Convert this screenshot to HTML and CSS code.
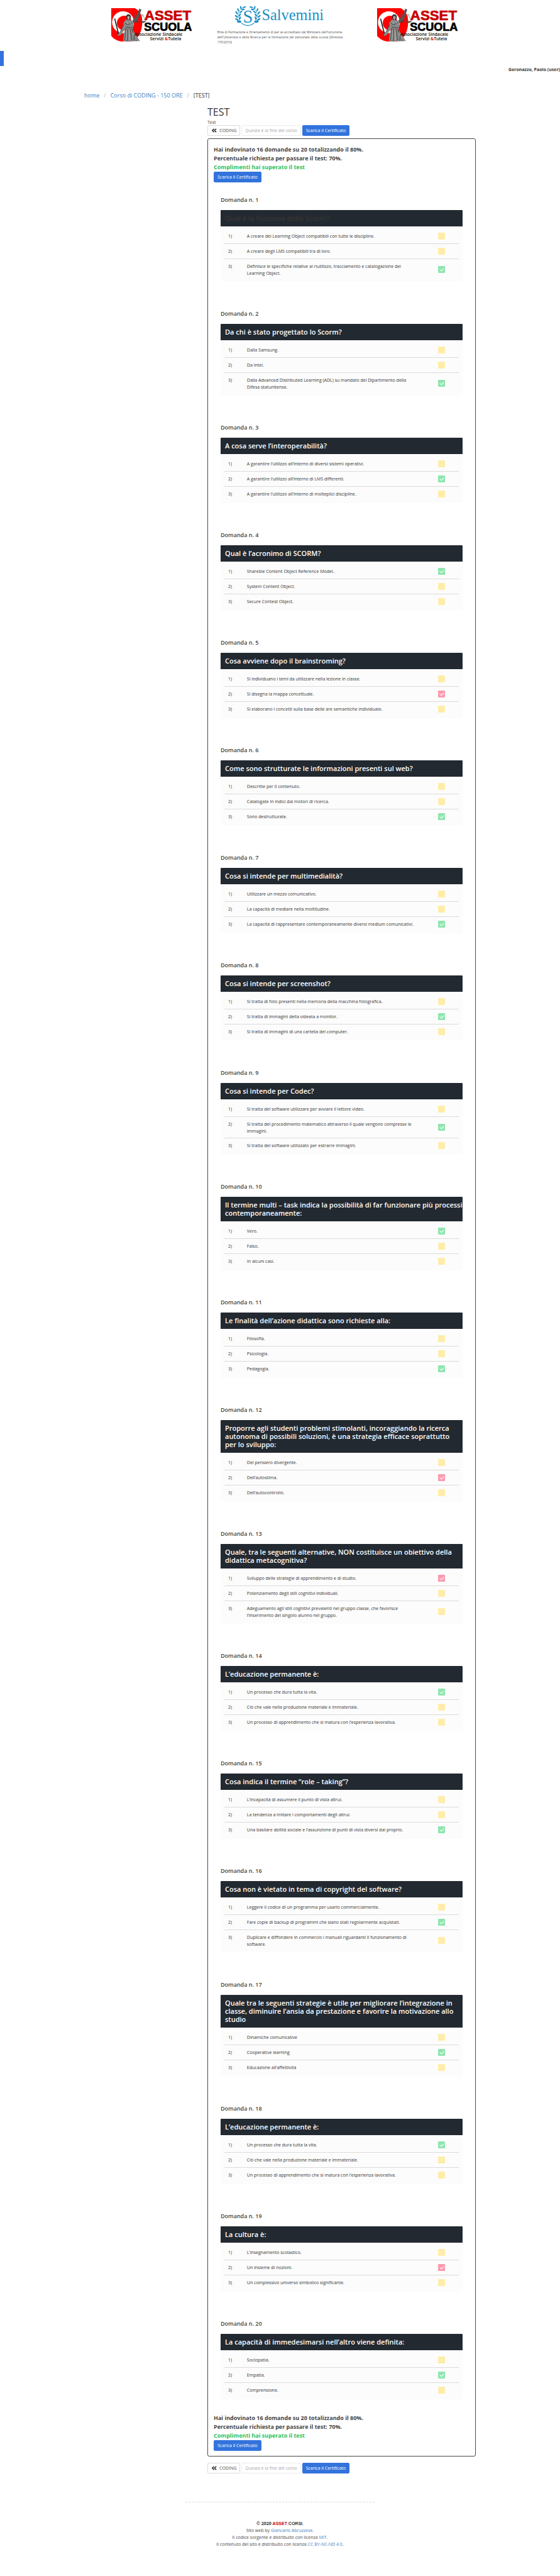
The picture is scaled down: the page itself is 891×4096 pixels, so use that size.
FILE: index.html
```html
<!DOCTYPE html>
<html lang="it">
<head>
    <meta charset="utf-8">
    <meta name="viewport" content="width=device-width, initial-scale=1">
    <title>TEST - Corso di CODING - 150 ORE</title>
    <link rel="stylesheet" href="styles.css">
</head>
<body>
    <header class="top">
        <svg class="logo" viewBox="0 0 164 76" role="img" aria-label="Asset Scuola">
            <g id="asset-logo">
                <path fill="#f00" d="M0 0H54C66 6 71 18 71 31C71 54 60 76 40 76H25C14 75 5 70 0 63Z"/>
                <circle cx="27" cy="32" r="25" fill="#fff"/>
                <circle cx="30" cy="34" r="17" fill="#f00"/>
                <g stroke="#555" stroke-width=".8" fill="none">
                    <path d="M52 14L73 15M54 14L50 29M56 14L61 29M71 15L68 30M73 15L78 30"/>
                    <path fill="#333" d="M49 29H62Q56 36 49 29ZM67 30H79Q73 36 67 30Z"/>
                </g>
                <path d="M8 24L18 64" stroke="#222" stroke-width="2.4"/>
                <path fill="#555" d="M64 1L69 3L67 9L61 26L50 35L48 29L58 18L62 8Z"/>
                <path fill="#8a8a8a" d="M35 25L42 27L50 29L51 40L49 49L57 62L66 75L27 76L29 57L33 46L22 61L16 64L15 61L26 43L29 31Z"/>
                <path fill="#333" d="M34 19Q35 13 40 14Q46 15 45 22L43 27H36Z"/>
                <path fill="#aaa" d="M37 18H42V24L39 27L37 24Z"/>
                <path stroke="#3c3c3c" stroke-width="1.3" fill="none" d="M34 46L31 74M38 47L37 75M43 47L47 74M47 48L58 75M31 34L38 38L48 33M33 43L49 45M29 37L22 52M53 60L52 75"/>
                <path stroke="#d0d0d0" stroke-width="1" fill="none" d="M35 50L34 72M41 49L42 73M50 56L57 72M36 31L37 35M44 31L44 35"/>
                <g class="logo-name">
                    <text x="76" y="27" font-size="32" fill="#c80000" stroke="#c80000">ASSET</text>
                    <text x="75" y="51" font-size="26" fill="#000" stroke="#000">SCUOLA</text>
                </g>
                <g class="logo-sub">
                    <text x="163" y="63" font-size="10" text-anchor="end">Associazione Sindacale</text>
                    <text x="160" y="73" font-size="10" text-anchor="end">Servizi <tspan fill="#d00">&amp;</tspan>Tutela</text>
                </g>
            </g>
        </svg>
        <div class="ente">
            <svg class="salvemini" viewBox="0 0 204 46" role="img" aria-label="Salvemini">
                <defs>
                    <g id="branch" fill="#1b8fc4">
                        <path d="M14 35C3 25 5 9 20 2" fill="none" stroke="#1b8fc4" stroke-width="1"/>
                        <ellipse cx="21" cy="2" rx="4" ry="1.5" transform="rotate(-15 21 2)"/>
                        <ellipse cx="13" cy="3" rx="1.6" ry="3.6" transform="rotate(-10 13 3)"/>
                        <ellipse cx="18" cy="7" rx="4" ry="1.5" transform="rotate(-10 18 7)"/>
                        <ellipse cx="7" cy="8" rx="1.6" ry="4" transform="rotate(-20 7 8)"/>
                        <ellipse cx="13" cy="13" rx="4" ry="1.6" transform="rotate(-35 13 13)"/>
                        <ellipse cx="3.5" cy="15" rx="1.7" ry="4.2" transform="rotate(-32 3.5 15)"/>
                        <ellipse cx="10.5" cy="20" rx="4" ry="1.7" transform="rotate(-50 10.5 20)"/>
                        <ellipse cx="3" cy="23" rx="1.8" ry="4.4" transform="rotate(-48 3 23)"/>
                        <ellipse cx="11" cy="27" rx="4" ry="1.8" transform="rotate(-70 11 27)"/>
                        <ellipse cx="4" cy="30" rx="1.8" ry="4.4" transform="rotate(-62 4 30)"/>
                        <ellipse cx="9" cy="35" rx="5" ry="2.6" transform="rotate(10 9 35)"/>
                    </g>
                </defs>
                <use href="#branch"/>
                <use href="#branch" transform="translate(58 0) scale(-1 1)"/>
                <path d="M14 38Q29 50 44 38" fill="none" stroke="#1b8fc4" stroke-width="1.6"/>
                <path d="M13 14A18 18 0 0 1 21 7M45 14A18 18 0 0 0 37 7" fill="none" stroke="#1b8fc4"/>
                <text class="salvemini-name" x="18" y="38" font-size="41">S</text>
                <text class="salvemini-name" x="61" y="32" font-size="35">Salvemini</text>
            </svg>
            <p class="ente-text">Ente di Formazione e Orientamento di per sé accreditato dal Ministero dell'Istruzione, dell'Università e della Ricerca per la formazione del personale della scuola (Direttiva 170/2016)</p>
        </div>
        <svg class="logo" viewBox="0 0 164 76" role="img" aria-label="Asset Scuola">
            <use href="#asset-logo"/>
        </svg>
    </header>

    <div class="userbar">
        <button class="menu-toggle" type="button" aria-label="Menu"></button>
        <p class="user">Geronazzo, Paolo (user)</p>
    </div>

    <main class="page">
        <nav class="breadcrumb" aria-label="breadcrumb">
            <a href="#">home</a>
            <a href="#">Corso di CODING - 150 ORE</a>
            <span>[TEST]</span>
        </nav>

        <div class="content">
            <h1 class="title">TEST</h1>
            <p class="subtitle">Test</p>
            <div class="buttons">
                <a class="button" href="#"><svg class="angles" viewBox="0 0 10 8"><path d="M5 1L2 4L5 7M9 1L6 4L9 7"/></svg>CODING</a>
                <button class="button" type="button" disabled>Questa è la fine del corso</button>
                <a class="button primary" href="#">Scarica il Certificato</a>
            </div>

            <section class="box">
                <div class="result">
                    <p>Hai indovinato 16 domande su 20 totalizzando il 80%.</p>
                    <p>Percentuale richiesta per passare il test: 70%.</p>
                    <p class="passed">Complimenti hai superato il test</p>
                    <a class="button primary" href="#">Scarica il Certificato</a>
                </div>

                <div id="questions"></div>

                <div class="result">
                    <p>Hai indovinato 16 domande su 20 totalizzando il 80%.</p>
                    <p>Percentuale richiesta per passare il test: 70%.</p>
                    <p class="passed">Complimenti hai superato il test</p>
                    <a class="button primary" href="#">Scarica il Certificato</a>
                </div>
            </section>

            <div class="buttons bottom">
                <a class="button" href="#"><svg class="angles" viewBox="0 0 10 8"><path d="M5 1L2 4L5 7M9 1L6 4L9 7"/></svg>CODING</a>
                <button class="button" type="button" disabled>Questa è la fine del corso</button>
                <a class="button primary" href="#">Scarica il Certificato</a>
            </div>
        </div>
    </main>

    <footer class="footer">
        <p><strong>© 2020 <span class="brand"><span class="red">ASSET</span> CORSI</span></strong>.</p>
        <p>Sito web by <a href="#">Giancarlo Abruzzese</a>.</p>
        <p>Il codice sorgente è distribuito con licenza <a href="#">MIT</a>.</p>
        <p>Il contenuto del sito è distribuito con licenza <a href="#">CC BY-NC-ND 4.0</a>.</p>
    </footer>

    <script src="script.js"></script>
</body>
</html>
```

FILE: styles.css
```css
* {
    box-sizing: border-box;
}

body {
    margin: 0;
    background-color: #fff;
    color: #4a4a4a;
    font-family: "Open Sans", "Noto Sans", sans-serif;
    font-size: 7px;
    line-height: 11px;
}

h1, h2, h3, p {
    margin: 0;
}

a {
    color: #4183c4;
    text-decoration: none;
}

/* header */
.top {
    display: grid;
    grid-template-columns: repeat(3, 1fr);
    justify-items: center;
    align-items: start;
    padding: 10px 128px;
}

.logo {
    width: 114px;
    height: 53px;
    margin-top: 3px;
    overflow: visible;
}

.logo-name {
    font-family: "Liberation Sans Narrow", "Liberation Sans", sans-serif;
    font-weight: bold;
}

.logo-sub {
    font-family: "Open Sans", sans-serif;
    font-weight: 600;
    fill: #111;
}

.ente {
    padding: 0 6px;
    text-align: center;
}

.salvemini {
    display: block;
    width: 142px;
    height: 32px;
    margin: 0 auto 5px;
    overflow: visible;
}

.salvemini-name {
    font-family: "Liberation Serif", serif;
    fill: #1b8fc4;
}

.ente-text {
    font-size: 5px;
    line-height: 8px;
    text-align: justify;
}

.userbar {
    text-align: right;
}

.menu-toggle {
    display: block;
    width: 6px;
    height: 24px;
    padding: 0;
    border: none;
    background-color: #3273dc;
}

.user {
    color: #363636;
    font-weight: bold;
}

/* page */
.page {
    padding: 29px 134px 0;
}

.breadcrumb {
    display: flex;
    font-size: 9px;
    line-height: 14px;
}

.breadcrumb span {
    color: #363636;
}

.breadcrumb > * + *::before {
    content: "/";
    padding: 0 7px;
    color: #b5b5b5;
}

.content {
    margin: 9px 0 0 196px;
}

.title {
    color: #363636;
    font-size: 16px;
    font-weight: normal;
    line-height: 20px;
}

.subtitle {
    margin-top: 2px;
    line-height: 9px;
}

.buttons {
    display: flex;
    gap: 2px;
    margin-bottom: 4px;
}

.buttons.bottom {
    margin: 10px 0 0;
}

.button {
    display: inline-flex;
    align-items: center;
    height: 17px;
    padding: 0 5px;
    border: 1px solid #dbdbdb;
    border-radius: 2px;
    background-color: #fff;
    color: #4a4a4a;
    font-family: inherit;
    font-size: 7px;
    line-height: 11px;
    white-space: nowrap;
}

.button:disabled {
    opacity: 0.5;
}

.button.primary {
    border-color: #3273dc;
    background-color: #3273dc;
    color: #fff;
}

.angles {
    width: 9px;
    height: 7px;
    margin-right: 4px;
    fill: none;
    stroke: #363636;
    stroke-width: 2;
}

.box {
    padding: 10px 20px 8px;
    border: 1px solid #4a4a4a;
    border-radius: 3px;
}

.result {
    margin: 0 -11px;
    color: #444;
    font-size: 9px;
    font-weight: bold;
    line-height: 14px;
}

.result .button {
    display: flex;
    width: fit-content;
    font-weight: normal;
}

.passed {
    color: #2bc25f;
}

/* questions */
.question {
    padding: 21px 0 22px;
}

.question h2 {
    margin-bottom: 9px;
    color: #444;
    font-size: 9px;
    font-weight: 600;
    line-height: 14px;
}

.question h3 {
    padding: 6px 0 7px 7px;
    border-radius: 1px 1px 0 0;
    background-color: #232930;
    color: #fff;
    font-size: 11px;
    font-weight: 600;
    line-height: 13px;
}

.question h3.dim {
    color: #363636;
}

.answers {
    margin-bottom: 1px;
    padding: 4px 6px 3px;
    background-color: #fcfcfc;
}

.answers table {
    width: 100%;
    border-spacing: 0;
    color: #363636;
}

.answers td {
    height: 24px;
    padding: 6px 6px 5px;
    border-bottom: 1px solid #dbdbdb;
    vertical-align: top;
}

.answers tr:last-child td {
    height: 23px;
    border-bottom: none;
}

.answers .num {
    width: 8%;
}

.answers .mark {
    width: 17%;
    padding-top: 5px;
    padding-left: 14px;
    text-align: center;
    vertical-align: middle;
}

.mark input {
    display: block;
    width: 11px;
    height: 11px;
    margin: 0 auto;
    border-radius: 1px;
    background-color: #ffdd57;
    opacity: 0.5;
    appearance: none;
}

.mark .right {
    background-color: #23d160;
}

.mark .wrong {
    background-color: #ff3860;
}

.mark input:checked::after {
    content: "";
    display: block;
    width: 5px;
    height: 3px;
    margin: 3px;
    border-bottom: 1px solid #fff;
    border-left: 1px solid #fff;
    transform: rotate(-45deg);
}

/* footer */
.footer {
    width: 301px;
    margin: 45px auto 0;
    padding: 28px 0 45px;
    border-top: 1px dashed #dbdbdb;
    text-align: center;
}

.footer strong {
    color: #363636;
}

.brand {
    font-family: "Liberation Sans", sans-serif;
}

.brand .red {
    color: #c80000;
}
```

FILE: script.js
```js
// chosen = index of the answer given by the user, wrong = it was not correct
const questions = [
    { text: 'Qual è la funzione dello Scorm?', dim: true, chosen: 2, answers: ['A creare dei Learning Object compatibili con tutte le discipline.', 'A creare degli LMS compatibili tra di loro.', 'Definisce le specifiche relative al riutilizzo, tracciamento e catalogazione dei Learning Object.'] },
    { text: 'Da chi è stato progettato lo Scorm?', chosen: 2, answers: ['Dalla Samsung.', 'Da Intel.', 'Dalla Advanced Distributed Learning (ADL) su mandato del Dipartimento della Difesa statunitense.'] },
    { text: 'A cosa serve l’interoperabilità?', chosen: 1, answers: ['A garantire l’utilizzo all’interno di diversi sistemi operativi.', 'A garantire l’utilizzo all’interno di LMS differenti.', 'A garantire l’utilizzo all’interno di molteplici discipline.'] },
    { text: 'Qual è l’acronimo di SCORM?', chosen: 0, answers: ['Shareble Content Object Reference Model.', 'System Content Object.', 'Secure Contest Object.'] },
    { text: 'Cosa avviene dopo il brainstroming?', chosen: 1, wrong: true, answers: ['Si individuano i temi da utilizzare nella lezione in classe.', 'Si disegna la mappa concettuale.', 'Si elaborano i concetti sulla base delle are semantiche individuate.'] },
    { text: 'Come sono strutturate le informazioni presenti sul web?', chosen: 2, answers: ['Descritte per il contenuto.', 'Catalogate in indici dai motori di ricerca.', 'Sono destrutturate.'] },
    { text: 'Cosa si intende per multimedialità?', chosen: 2, answers: ['Utilizzare un mezzo comunicativo.', 'La capacità di mediare nella moltitudine.', 'La capacità di rappresentare contemporaneamente diversi medium comunicativi.'] },
    { text: 'Cosa si intende per screenshot?', chosen: 1, answers: ['Si tratta di foto presenti nella memoria della macchina fotografica.', 'Si tratta di immagini della videata a monitor.', 'Si tratta di immagini di una cartella del computer.'] },
    { text: 'Cosa si intende per Codec?', chosen: 1, answers: ['Si tratta del software utilizzare per avviare il lettore video.', 'Si tratta del procedimento matematico attraverso il quale vengono compresse le immagini.', 'Si tratta del software utilizzato per estrarre immagini.'] },
    { text: 'Il termine multi – task indica la possibilità di far funzionare più processi contemporaneamente:', chosen: 0, answers: ['Vero.', 'Falso.', 'In alcuni casi.'] },
    { text: 'Le finalità dell’azione didattica sono richieste alla:', chosen: 2, answers: ['Filosofia.', 'Psicologia.', 'Pedagogia.'] },
    { text: 'Proporre agli studenti problemi stimolanti, incoraggiando la ricerca autonoma di possibili soluzioni, è una strategia efficace soprattutto per lo sviluppo:', chosen: 1, wrong: true, answers: ['Del pensiero divergente.', 'Dell’autostima.', 'Dell’autocontrollo.'] },
    { text: 'Quale, tra le seguenti alternative, NON costituisce un obiettivo della didattica metacognitiva?', chosen: 0, wrong: true, answers: ['Sviluppo delle strategie di apprendimento e di studio.', 'Potenziamento degli stili cognitivi individuali.', 'Adeguamento agli stili cognitivi prevalenti nel gruppo classe, che favorisce l’inserimento del singolo alunno nel gruppo.'] },
    { text: 'L’educazione permanente è:', chosen: 0, answers: ['Un processo che dura tutta la vita.', 'Ciò che vale nella produzione materiale e immateriale.', 'Un processo di apprendimento che si matura con l’esperienza lavorativa.'] },
    { text: 'Cosa indica il termine “role – taking”?', chosen: 2, answers: ['L’incapacità di assumere il punto di vista altrui.', 'La tendenza a imitare i comportamenti degli altrui.', 'Una basilare abilità sociale e l’assunzione di punti di vista diversi dal proprio.'] },
    { text: 'Cosa non è vietato in tema di copyright del software?', chosen: 1, answers: ['Leggere il codice di un programma per usarlo commercialmente.', 'Fare copie di backup di programmi che siano stati regolarmente acquistati.', 'Duplicare e diffondere in commercio i manuali riguardanti il funzionamento di software.'] },
    { text: 'Quale tra le seguenti strategie è utile per migliorare l’integrazione in classe, diminuire l’ansia da prestazione e favorire la motivazione allo studio', chosen: 1, answers: ['Dinamiche comunicative', 'Cooperative learning', 'Educazione all’affettività'] },
    { text: 'L’educazione permanente è:', chosen: 0, answers: ['Un processo che dura tutta la vita.', 'Ciò che vale nella produzione materiale e immateriale.', 'Un processo di apprendimento che si matura con l’esperienza lavorativa.'] },
    { text: 'La cultura è:', chosen: 1, wrong: true, answers: ['L’insegnamento scolastico.', 'Un insieme di nozioni.', 'Un complessivo universo simbolico significante.'] },
    { text: 'La capacità di immedesimarsi nell’altro viene definita:', chosen: 1, answers: ['Sociopatia.', 'Empatia.', 'Comprensione.'] }
];

const container = document.getElementById('questions');

questions.forEach((question, q) => {
    const rows = question.answers.map((answer, a) => {
        const id = `q${q + 1}-${a + 1}`;
        const chosen = question.chosen === a;
        const state = chosen ? (question.wrong ? 'wrong' : 'right') : '';
        return `<tr>
            <td class="num">${a + 1})</td>
            <td><label for="${id}">${answer}</label></td>
            <td class="mark"><input type="checkbox" id="${id}" class="${state}" disabled ${chosen ? 'checked' : ''}></td>
        </tr>`;
    }).join('');

    container.insertAdjacentHTML('beforeend', `<article class="question">
        <h2>Domanda n. ${q + 1}</h2>
        <h3 class="${question.dim ? 'dim' : ''}">${question.text}</h3>
        <div class="answers"><table>${rows}</table></div>
    </article>`);
});
```
